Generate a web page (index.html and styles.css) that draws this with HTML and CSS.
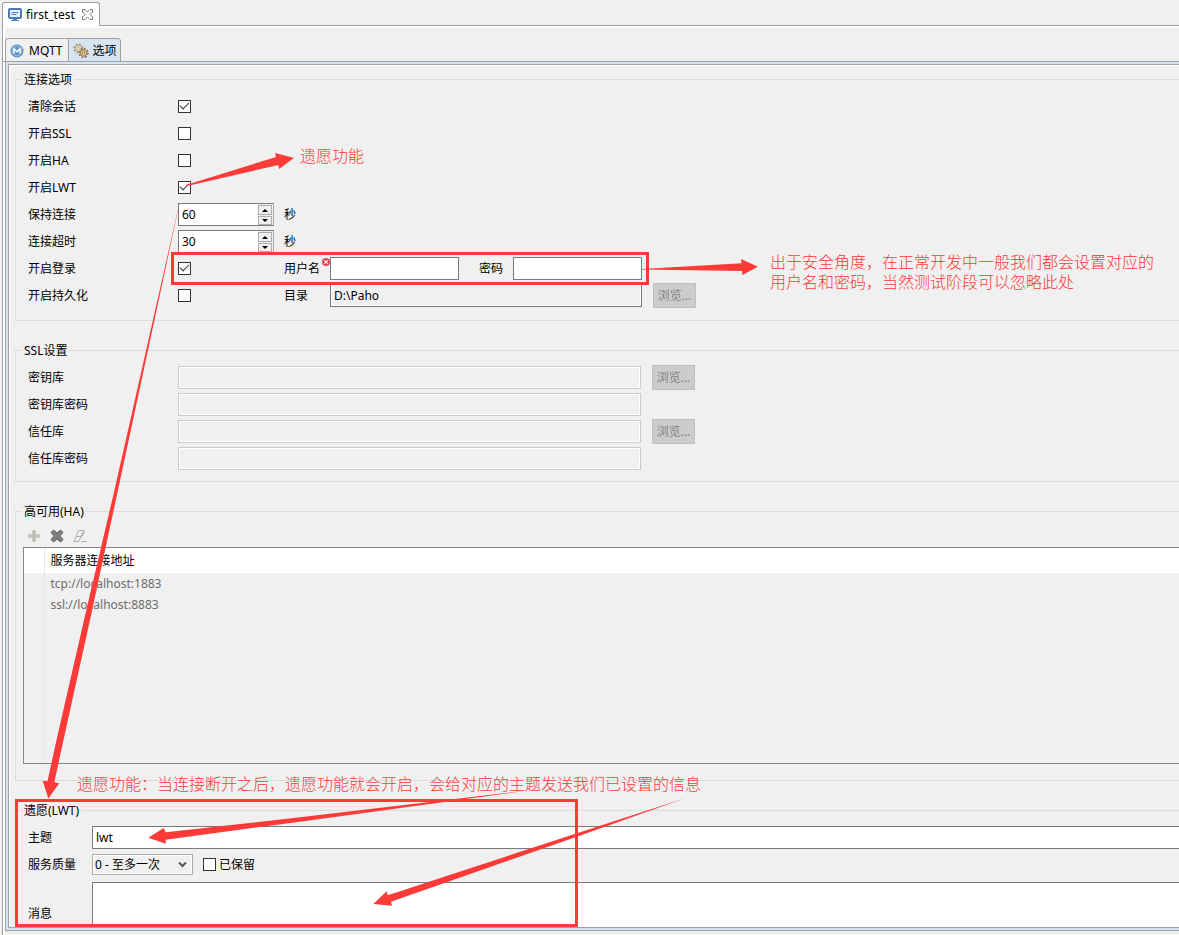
FILE: index.html
```html
<!DOCTYPE html>
<html lang="zh-CN">
<head>
<meta charset="utf-8">
<title>first_test</title>
<link rel="stylesheet" href="styles.css">
</head>
<body>
<div class="editor">
  <div class="file-tabs">
    <div class="file-tab">
      <svg class="icon" width="14" height="14" viewBox="0 0 14 14"><rect x="1" y="1" width="12" height="9" rx="1" fill="#e8f1fa" stroke="#4a7ab8" stroke-width="2"/><path d="M3.500 4.500h7M3.500 6.500h5" stroke="#4d7fbd"/><path d="M5 11h4v1h2v1H3v-1h2z" fill="#5586bd"/></svg>
      <span>first_test</span>
      <button class="close" aria-label="关闭"><svg width="11" height="11" viewBox="0 0 11 11"><path d="M.5.5h2.500l2.500 2.500L8 .5h2.500V3L8 5.500 10.500 8v2.500H8L5.500 8 3 10.500H.5V8L3 5.500.5 3z" fill="#fff" stroke="#777"/></svg></button>
    </div>
  </div>
  <div class="workspace">
    <nav class="page-tabs">
      <button class="page-tab"><svg class="icon" width="14" height="14" viewBox="0 0 14 14"><circle cx="7" cy="7" r="6.500" fill="#4b86c2"/><circle cx="7" cy="7" r="5" fill="#5f97ce" stroke="#b9d3ec" stroke-width=".8"/><path d="M4 9.500V4.800l3 3 3-3v4.700" fill="none" stroke="#fff" stroke-width="1.500"/></svg>MQTT</button>
      <button class="page-tab selected"><svg class="icon" width="16" height="16" viewBox="0 0 16 16"><circle cx="5.500" cy="5.500" r="4.300" fill="none" stroke="#a58a6c" stroke-width="1.600" stroke-dasharray="1.700 1.700"/><circle cx="5.500" cy="5.500" r="3.200" fill="#f6e8cf" stroke="#b39a78"/><circle cx="5.500" cy="5.500" r="1.200" fill="#fff" stroke="#a58a6c" stroke-width=".8"/><circle cx="10.500" cy="10" r="4.400" fill="none" stroke="#8c6a46" stroke-width="1.600" stroke-dasharray="1.720 1.720"/><circle cx="10.500" cy="10" r="3.300" fill="#ecd09a" stroke="#9a7648"/><circle cx="10.500" cy="10" r="1.300" fill="#fff" stroke="#7b5632" stroke-width=".8"/></svg>选项</button>
    </nav>
    <main class="panel">
      <form class="form">
        <fieldset class="group connection">
          <legend>连接选项</legend>
          <div class="row"><label class="name" for="clean">清除会话</label><input type="checkbox" id="clean" checked></div>
          <div class="row"><label class="name" for="ssl">开启SSL</label><input type="checkbox" id="ssl"></div>
          <div class="row"><label class="name" for="ha">开启HA</label><input type="checkbox" id="ha"></div>
          <div class="row"><label class="name" for="lwt">开启LWT</label><input type="checkbox" id="lwt" checked></div>
          <div class="row"><label class="name" for="keep">保持连接</label><div class="control"><div class="spinner"><input type="text" id="keep" value="60"><button type="button" aria-label="增加"></button><button type="button" class="down" aria-label="减少"></button></div></div><span>秒</span></div>
          <div class="row"><label class="name" for="timeout">连接超时</label><div class="control"><div class="spinner"><input type="text" id="timeout" value="30"><button type="button" aria-label="增加"></button><button type="button" class="down" aria-label="减少"></button></div></div><span>秒</span></div>
          <div class="row"><label class="name" for="login">开启登录</label><div class="control"><input type="checkbox" id="login" checked></div><label class="sub required" for="user">用户名<svg width="8" height="8" viewBox="0 0 8 8"><circle cx="4" cy="4" r="4" fill="#d9485a"/><path d="M2.300 2.300l3.400 3.400m0-3.400L2.300 5.700" stroke="#fff" stroke-width="1.200"/></svg></label><input class="field short" type="text" id="user"><label class="password-label" for="password">密码</label><input class="field short" type="password" id="password"></div>
          <div class="row"><label class="name" for="persist">开启持久化</label><div class="control"><input type="checkbox" id="persist"></div><label class="sub" for="dir">目录</label><input class="field directory" type="text" id="dir" value="D:\Paho" readonly><button type="button" class="browse" disabled>浏览...</button></div>
        </fieldset>
        <fieldset class="group ssl">
          <legend>SSL设置</legend>
          <div class="row"><label class="name" for="ks">密钥库</label><input class="field long" type="text" id="ks" disabled><button type="button" class="browse" disabled>浏览...</button></div>
          <div class="row"><label class="name" for="ksp">密钥库密码</label><input class="field long" type="password" id="ksp" disabled></div>
          <div class="row"><label class="name" for="ts">信任库</label><input class="field long" type="text" id="ts" disabled><button type="button" class="browse" disabled>浏览...</button></div>
          <div class="row"><label class="name" for="tsp">信任库密码</label><input class="field long" type="password" id="tsp" disabled></div>
        </fieldset>
        <fieldset class="group servers">
          <legend>高可用(HA)</legend>
          <div class="tools">
            <button type="button" aria-label="添加"><svg width="14" height="14" viewBox="0 0 14 14"><path d="M5.500 1.500h3v4h4v3h-4v4h-3v-4h-4v-3h4z" fill="#bdbdb5" stroke="#cbcbc4"/></svg></button>
            <button type="button" aria-label="删除"><svg width="14" height="14" viewBox="0 0 14 14"><path d="M3.500 1L7 4l3.500-3L13 3.500 9.800 7l3.200 3.500-2.500 2.500L7 10l-3.500 3L1 10.500 4.200 7 1 3.500z" fill="#7d7d7d" stroke="#606060"/></svg></button>
            <button type="button" aria-label="清除"><svg width="14" height="14" viewBox="0 0 14 14"><path d="M5.500 1.500h5l1 1L9.500 7M1 12.500L5.500 1.500M1 12.500h4.500L8 8M4 7.500h4l1.500-1M10.500 1.500L8 7.500M8.500 12.500h5" fill="none" stroke="#aaa"/></svg></button>
          </div>
          <div class="table-box">
            <table>
              <thead><tr><th class="mark"></th><th>服务器连接地址</th></tr></thead>
              <tbody>
                <tr><td class="mark"></td><td>tcp://localhost:1883</td></tr>
                <tr><td class="mark"></td><td>ssl://localhost:8883</td></tr>
                <tr class="rest"><td class="mark"></td><td></td></tr>
              </tbody>
            </table>
          </div>
        </fieldset>
        <fieldset class="group will">
          <legend>遗愿(LWT)</legend>
          <div class="row"><label class="name" for="topic">主题</label><input class="field fill" type="text" id="topic" value="lwt"></div>
          <div class="row"><label class="name" for="qos">服务质量</label><div class="select"><select id="qos"><option>0 - 至多一次</option></select><svg width="9" height="7" viewBox="0 0 9 7"><path d="M1 1.500l3.500 3.500L8 1.500" fill="none" stroke="#555" stroke-width="2"/></svg></div><input type="checkbox" id="retained"><label class="retained-label" for="retained">已保留</label></div>
          <div class="row message"><label class="name" for="message">消息</label><textarea class="field fill" id="message"></textarea></div>
        </fieldset>
      </form>
    </main>
  </div>
</div>
<div class="notes">
  <svg class="marks" width="1179" height="935" viewBox="0 0 1179 935">
    <rect x="172.500" y="253.500" width="475" height="30"/>
    <rect x="16.500" y="800.500" width="560" height="125"/>
    <path d="M186 185L276 157l-1-4 19 5-15 11-.5-4L187 186z"/>
    <path d="M642 269l99.700-5.700-.7-4.300 17 7.700L742.300 275l-.3-4-100 -1.500z"/>
    <path d="M181 196L114.500 490 84 620 56.500 740l-9 41.300-4.800-.6 5.600 17.800 11-15.200-5-1L63.500 740 90 620l28-130L160.500 292z"/>
    <path d="M528 790.500L300 817.300l-134.300 15-2-4.300-15.400 9.700 17.400 6v-4L300 821.700z"/>
    <path d="M685 798.300L577 833.200l-189.300 62.100-1-4L373.300 904l18.700 1.700-1-4L577.500 836.500z"/>
  </svg>
  <p class="note note-will">遗愿功能</p>
  <p class="note note-login">出于安全角度，在正常开发中一般我们都会设置对应的<br>用户名和密码，当然测试阶段可以忽略此处</p>
  <p class="note note-topic">遗愿功能：当连接断开之后，遗愿功能就会开启，会给对应的主题发送我们已设置的信息</p>
</div>
</body>
</html>
```
FILE: styles.css
```css
* { box-sizing: border-box; }
body {
  margin: 0;
  height: 100vh;
  overflow: hidden;
  position: relative;
  background: #f0f0f0;
  color: #000;
  font: 12px/18px "Noto Sans", "Noto Sans CJK SC", sans-serif;
}
input, select, button, textarea { font: inherit; color: inherit; margin: 0; }
button { cursor: default; }
.icon { flex: none; }

.editor { height: 100%; padding: 2px 0 0 2px; display: flex; flex-direction: column; }
.file-tabs { display: flex; height: 24px; border-bottom: 1px solid #a0a0a0; flex: none; }
.file-tab {
  display: flex; align-items: center; height: 24px; padding: 0 6px 0 5px;
  background: #fff; border: 1px solid #a0a0a0; border-bottom: 0; border-radius: 3px 3px 0 0;
}
.file-tab span { margin: 0 7px 0 4px; }
.close { display: flex; padding: 0; border: 0; background: none; }

.workspace {
  flex: 1; min-height: 0; display: flex; flex-direction: column;
  padding: 10px 0 4px; border-left: 1px solid #a0a0a0;
  box-shadow: inset 2px 2px #fff;
}
.page-tabs { display: flex; height: 24px; padding-left: 2px; border-bottom: 1px solid #a0a0a0; flex: none; margin-top: 2px; }
.page-tab {
  display: flex; align-items: center; height: 24px; padding: 1px 6px 0 4px;
  background: #f0f0f0; border: 1px solid #a0a0a0; border-right: 0; border-radius: 3px 0 0 0;
}
.page-tab .icon { margin-right: 5px; }
.page-tab.selected { background: #d7e4f2; border-right: 1px solid #a0a0a0; border-radius: 0 3px 0 0; padding: 1px 3px 0 4px; }
.page-tab.selected .icon { margin-right: 3px; }

.panel {
  flex: 1; min-height: 0; display: flex; margin-left: 2px; padding: 2px 0 2px 2px;
  background: #d7e4f2; border: 1px solid #a0a0a0; border-width: 0 0 1px 1px;
}
.form {
  flex: 1; min-width: 0; overflow: hidden; padding: 5px 0 0 6px;
  background: #f0f0f0; border: 1px solid #a0a0a0; border-right: 0;
  box-shadow: inset 1px 1px #fff;
}
.group { margin: 0; padding: 5px 0 11px 12px; border: 1px solid #dcdcdc; border-right: 0; min-width: 0; }
.group legend { height: 18px; line-height: 20px; margin-left: -6px; padding: 0 2px; }
.connection, .ssl, .servers { margin-bottom: 20px; }
.ssl { padding-bottom: 9px; }

.row { display: flex; align-items: center; height: 27px; }
.name { width: 150px; flex: none; }
.control { width: 106px; flex: none; display: flex; }
.sub { width: 46px; flex: none; position: relative; }
.required svg { position: absolute; right: 0; top: -2px; }
.password-label { width: 34px; margin-left: 20px; }
.field { height: 23px; padding: 0 3px; border: 1px solid #7a7a7a; border-radius: 0; background: #fff; outline: 0; }
.field:disabled, .field:read-only { background: #f0f0f0; box-shadow: inset 0 0 0 1px #fff; }
.field:disabled { border-color: #ccc; }
.short { width: 129px; }
.directory { width: 312px; }
.long { width: 463px; }
.fill { flex: 1; min-width: 0; border-right: 0; }
.browse { width: 43px; height: 25px; margin-left: 11px; padding: 0; background: #ccc; border: 1px solid #bfbfbf; color: #838383; }

input[type="checkbox"] { appearance: none; width: 13px; height: 13px; background: #fff; border: 1px solid #333; display: grid; place-items: center; flex: none; }
input[type="checkbox"]:checked::before { content: ""; width: 8px; height: 4px; border: solid #333; border-width: 0 0 1px 1px; transform: translateY(-2px) rotate(-45deg); }

.spinner { display: grid; grid-template: 11px 10px / 1fr 15px; width: 96px; height: 23px; border: 1px solid #7a7a7a; border-right-color: #aaa; background: #f0f0f0; }
.spinner input { grid-row: 1 / 3; min-width: 0; border: 0; padding: 0 3px; background: #fff; outline: 0; }
.spinner button { display: grid; place-items: center; padding: 0; margin: 1px 1px 0 0; border: 1px solid #acacac; background: #f0f0f0; }
.spinner button::before { content: ""; border: solid transparent; border-width: 0 3px 3px; border-bottom-color: #000; }
.spinner .down::before { border-width: 3px 3px 0; border-top-color: #000; }

.servers { padding: 6px 0 16px 7px; }
.servers legend { margin-left: -1px; }
.tools { display: flex; gap: 9px; height: 20px; margin-bottom: 1px; padding-left: 4px; align-items: center; }
.tools button { display: flex; padding: 0; border: 0; background: none; }
.table-box { height: 217px; border: 1px solid #828790; border-right: 0; }
table { width: 100%; height: 100%; border-collapse: collapse; }
th, td { padding: 0 6px; text-align: left; font-weight: 400; }
th { height: 25px; background: #fff; }
td { height: 21px; color: #6d6d6d; }
.mark { width: 20px; padding: 0; border-right: 1px solid #dce6f4; }
.rest td { height: auto; }

.will { border-bottom: 0; }
.will .name { width: 64px; }
.select { position: relative; width: 101px; margin-right: 10px; }
.select select { appearance: none; display: block; width: 100%; height: 21px; padding: 0 2px; border: 1px solid #acacb4; border-radius: 0; background: #f0f0f0; box-shadow: inset 0 0 0 1px #fff; }
.select svg { position: absolute; right: 6px; top: 7px; pointer-events: none; }
.retained-label { margin-left: 3px; }
.message { height: auto; margin-top: 4px; }
.message .field { height: 64px; resize: none; }

.notes { position: absolute; inset: 0; overflow: hidden; pointer-events: none; }
.marks { position: absolute; left: 0; top: 0; fill: #fc3a38; }
.marks rect { fill: none; stroke: #fc3a38; stroke-width: 3px; }
.note { position: absolute; margin: 0; color: #fc3a38; font: 300 16px/20px "Liberation Sans", "Noto Sans CJK SC", sans-serif; white-space: nowrap; }
.note-will { left: 300px; top: 147px; }
.note-login { left: 770px; top: 253px; }
.note-topic { left: 77px; top: 775px; }
```
